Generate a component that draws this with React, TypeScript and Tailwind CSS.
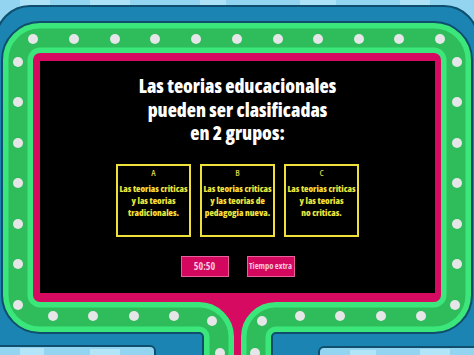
import React from "react";

const TRACK =
  "M 219 370 L 219 337 A 20 20 0 0 0 199 317 L 40 317 A 22 22 0 0 1 18 295 L 18 60 A 22 22 0 0 1 40 38 L 434 38 A 22 22 0 0 1 456 60 L 456 295 A 22 22 0 0 1 434 317 L 276 317 A 20 20 0 0 0 256 337 L 256 370";

const DOTS: [number, number][] = [
  [33, 39], [74, 39], [115, 39], [155, 39], [196, 39], [237, 39], [278, 39], [318, 39], [359, 39], [399, 39], [440, 39],
  [18, 62], [18, 102], [18, 143], [18, 183], [18, 224], [18, 264], [18, 305],
  [457, 62], [457, 102], [457, 143], [457, 183], [457, 224], [457, 264], [455, 305],
  [53, 316], [93, 316], [134, 316], [174, 316], [212, 321], [220, 353],
  [421, 316], [381, 316], [340, 316], [300, 316], [262, 321], [255, 353],
];

function Frame() {
  return (
    <svg className="absolute inset-0" width="474" height="355" viewBox="0 0 474 355">
      <rect x="0" y="0" width="474" height="355" fill="#93d5f1" />
      <rect x="20" y="0" width="30" height="6" fill="#aee2f6" />
      <rect x="90" y="0" width="40" height="6" fill="#aee2f6" />
      <rect x="200" y="0" width="26" height="6" fill="#aee2f6" />
      <rect x="300" y="0" width="36" height="6" fill="#aee2f6" />
      <rect x="400" y="0" width="30" height="6" fill="#aee2f6" />
      <rect x="-4" y="6" width="482" height="420" rx="34" fill="#1b84b3" stroke="#0f4e6d" strokeWidth="2" />
      <rect x="-20" y="346" width="175" height="40" rx="5" fill="#93d5f1" stroke="#0f4e6d" strokeWidth="2" />
      <rect x="319" y="347" width="180" height="40" rx="5" fill="#93d5f1" stroke="#0f4e6d" strokeWidth="2" />
      <rect x="20" y="348" width="24" height="8" fill="#b3e5f8" />
      <rect x="90" y="349" width="30" height="8" fill="#b3e5f8" />
      <rect x="350" y="350" width="26" height="8" fill="#b3e5f8" />
      <rect x="420" y="349" width="30" height="8" fill="#b3e5f8" />
      <path d={TRACK} fill="none" stroke="#0f4e6d" strokeWidth="34" strokeLinejoin="round" />
      <path d={TRACK + " Z"} fill="#d70a61" />
      <path d={TRACK} fill="none" stroke="#3be67b" strokeWidth="30" strokeLinejoin="round" />
      <path d={TRACK} fill="none" stroke="#2ebd5a" strokeWidth="19" strokeLinejoin="round" />
      {DOTS.map(([x, y], i) => (
        <circle key={i} cx={x} cy={y} r="5" fill="#e6e6e8" />
      ))}
    </svg>
  );
}

const boxes = [
  { l: "A", t: ["Las teorias criticas", "y las teorias", "tradicionales."] },
  { l: "B", t: ["Las teorias criticas", "y las teorias de", "pedagogia nueva."] },
  { l: "C", t: ["Las teorias criticas", "y las teorias", "no criticas."] },
];

export default function App() {
  return (
    <div className="relative w-[474px] h-[355px] overflow-hidden bg-[#93d5f1] font-['Open_Sans',sans-serif]">
      <Frame />
      <div className="relative pt-[61px] pl-[40px]">
        <div className="w-[395px] h-[232px] bg-black flex flex-col items-center">
          <div className="mt-[14px] text-white font-extrabold font-stretch-[86%] text-[19px] leading-[23.5px] text-center">
            <div>Las teorias educacionales</div>
            <div>pueden ser clasificadas</div>
            <div>en 2 grupos:</div>
          </div>
          <div className="mt-[18px] flex gap-[9px]">
            {boxes.map((b) => (
              <div
                key={b.l}
                className="w-[75px] h-[73px] border-2 border-[#f0e03a] flex flex-col items-center pt-[1px] font-stretch-condensed"
              >
                <div className="text-[9px] leading-[12px] font-semibold text-[#d8ca45]">{b.l}</div>
                <div className="mt-[4px] text-[9px] leading-[12px] font-extrabold text-[#f3e43b] text-center whitespace-nowrap">
                  {b.t.map((s) => (
                    <div key={s}>{s}</div>
                  ))}
                </div>
              </div>
            ))}
          </div>
          <div className="mt-[19px] flex gap-[18px] font-stretch-condensed">
            <div className="w-[48px] h-[21px] bg-[#d4075f] border border-[#e8609a] flex items-center justify-center text-[10px] font-bold text-[#f6c8dc]">
              50:50
            </div>
            <div className="w-[48px] h-[21px] bg-[#d4075f] border border-[#e8609a] flex items-center justify-center text-[8.5px] font-bold text-[#f6c8dc] whitespace-nowrap">
              Tiempo extra
            </div>
          </div>
        </div>
      </div>
    </div>
  );
}
